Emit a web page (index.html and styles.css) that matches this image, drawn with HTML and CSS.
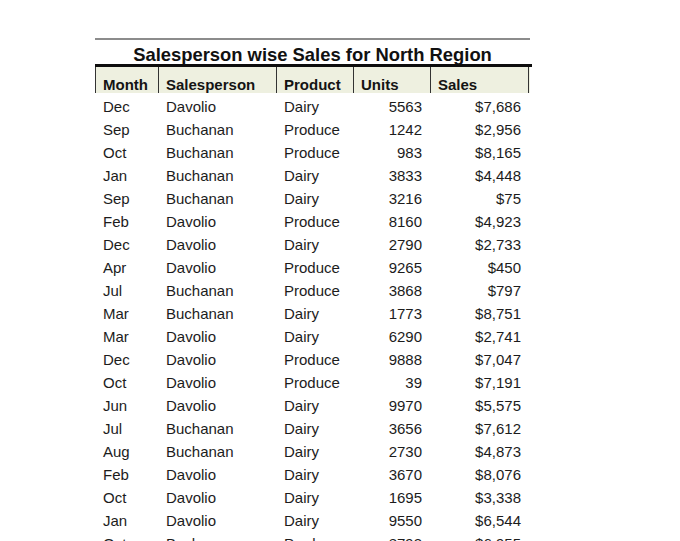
FILE: index.html
```html
<!DOCTYPE html>
<html>
<head>
<meta charset="utf-8">
<link rel="stylesheet" href="styles.css">
</head>
<body>
<div class="sheet">
  <div class="rule"></div>
  <div class="title">Salesperson wise Sales for North Region</div>
  <div class="thick"></div>
  <div class="grid head">
    <div class="c">Month</div>
    <div class="c">Salesperson</div>
    <div class="c">Product</div>
    <div class="c">Units</div>
    <div class="c last">Sales</div>
  </div>
  <div class="body">
    <div class="grid row"><div>Dec</div><div>Davolio</div><div>Dairy</div><div class="n">5563</div><div class="n">$7,686</div></div>
    <div class="grid row"><div>Sep</div><div>Buchanan</div><div>Produce</div><div class="n">1242</div><div class="n">$2,956</div></div>
    <div class="grid row"><div>Oct</div><div>Buchanan</div><div>Produce</div><div class="n">983</div><div class="n">$8,165</div></div>
    <div class="grid row"><div>Jan</div><div>Buchanan</div><div>Dairy</div><div class="n">3833</div><div class="n">$4,448</div></div>
    <div class="grid row"><div>Sep</div><div>Buchanan</div><div>Dairy</div><div class="n">3216</div><div class="n">$75</div></div>
    <div class="grid row"><div>Feb</div><div>Davolio</div><div>Produce</div><div class="n">8160</div><div class="n">$4,923</div></div>
    <div class="grid row"><div>Dec</div><div>Davolio</div><div>Dairy</div><div class="n">2790</div><div class="n">$2,733</div></div>
    <div class="grid row"><div>Apr</div><div>Davolio</div><div>Produce</div><div class="n">9265</div><div class="n">$450</div></div>
    <div class="grid row"><div>Jul</div><div>Buchanan</div><div>Produce</div><div class="n">3868</div><div class="n">$797</div></div>
    <div class="grid row"><div>Mar</div><div>Buchanan</div><div>Dairy</div><div class="n">1773</div><div class="n">$8,751</div></div>
    <div class="grid row"><div>Mar</div><div>Davolio</div><div>Dairy</div><div class="n">6290</div><div class="n">$2,741</div></div>
    <div class="grid row"><div>Dec</div><div>Davolio</div><div>Produce</div><div class="n">9888</div><div class="n">$7,047</div></div>
    <div class="grid row"><div>Oct</div><div>Davolio</div><div>Produce</div><div class="n">39</div><div class="n">$7,191</div></div>
    <div class="grid row"><div>Jun</div><div>Davolio</div><div>Dairy</div><div class="n">9970</div><div class="n">$5,575</div></div>
    <div class="grid row"><div>Jul</div><div>Buchanan</div><div>Dairy</div><div class="n">3656</div><div class="n">$7,612</div></div>
    <div class="grid row"><div>Aug</div><div>Buchanan</div><div>Dairy</div><div class="n">2730</div><div class="n">$4,873</div></div>
    <div class="grid row"><div>Feb</div><div>Davolio</div><div>Dairy</div><div class="n">3670</div><div class="n">$8,076</div></div>
    <div class="grid row"><div>Oct</div><div>Davolio</div><div>Dairy</div><div class="n">1695</div><div class="n">$3,338</div></div>
    <div class="grid row"><div>Jan</div><div>Davolio</div><div>Dairy</div><div class="n">9550</div><div class="n">$6,544</div></div>
    <div class="grid row"><div>Oct</div><div>Buchanan</div><div>Produce</div><div class="n">8793</div><div class="n">$6,955</div></div>
  </div>
</div>
</body>
</html>
```

FILE: styles.css
```css
html, body {
  margin: 0;
  padding: 0;
  background: #ffffff;
}
body {
  font-family: "Liberation Sans", Arial, sans-serif;
  color: #1c1c1c;
  overflow: hidden;
  height: 541px;
}
.sheet {
  margin-left: 95px;
  padding-top: 38px;
  width: 437px;
}
.rule {
  width: 435px;
  height: 2px;
  background: #8c8c8c;
}
.title {
  width: 435px;
  height: 24px;
  line-height: 30px;
  text-align: center;
  font-weight: bold;
  font-size: 18.4px;
  color: #111111;
  overflow: visible;
}
.thick {
  width: 437px;
  height: 3px;
  background: #0d0d0d;
}
.grid {
  display: grid;
  grid-template-columns: 63px 118px 77px 77px 99px;
  width: 435px;
}
.head {
  height: 26px;
  background: #eef0e0;
  font-weight: bold;
  font-size: 15px;
  color: #141414;
}
.head .c {
  border-left: 1px solid #333333;
  padding-left: 7px;
  line-height: 35px;
  height: 26px;
  overflow: hidden;
}
.head .c.last {
  border-right: 1px solid #333333;
}
.body {
  padding-top: 2px;
}
.row {
  height: 23px;
  line-height: 23px;
  font-size: 15px;
}
.row > div {
  padding-left: 8px;
  white-space: nowrap;
}
.row > .n {
  text-align: right;
  padding-left: 0;
  padding-right: 8px;
}
```
